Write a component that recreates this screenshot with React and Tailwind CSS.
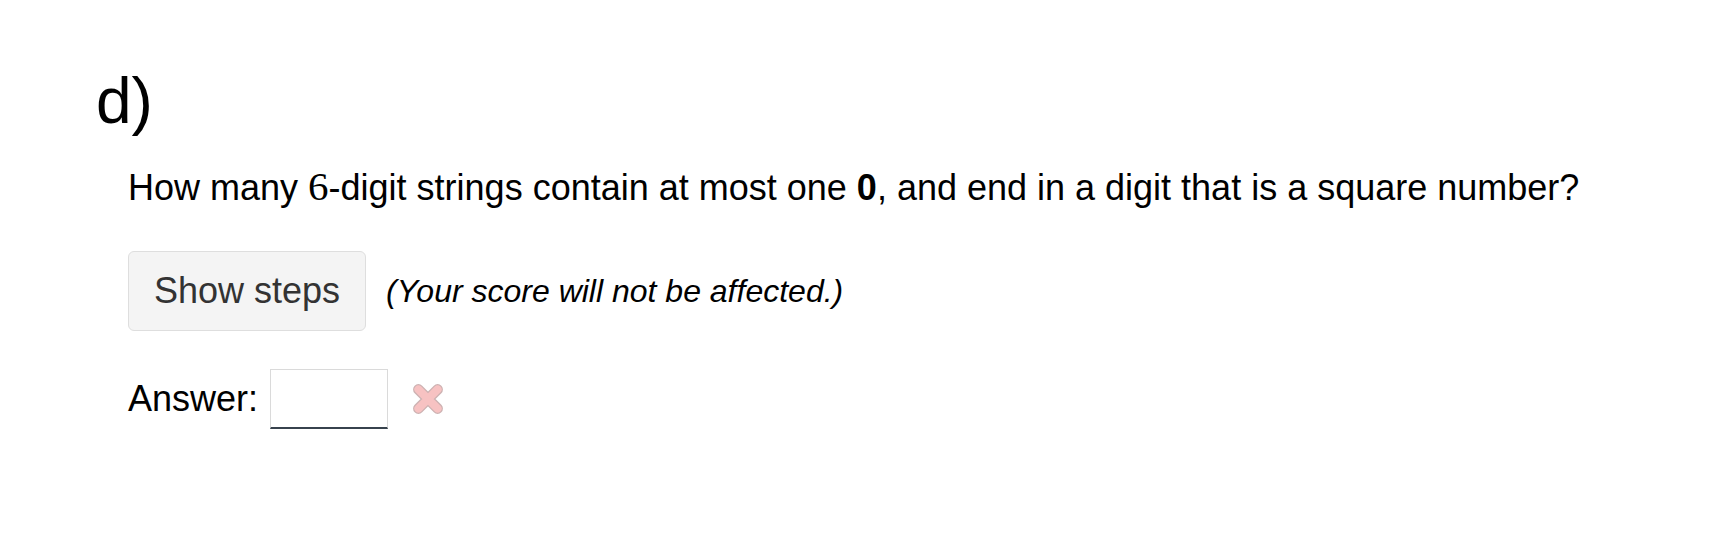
import React, { useState } from 'react';

function WrongMark() {
  return (
    <svg width="32" height="32" viewBox="0 0 30 30" aria-hidden="true">
      <g strokeLinecap="round" fill="none">
        <path d="M6 6 L24 24 M24 6 L6 24" stroke="#cdb2b2" strokeWidth="10" />
        <path d="M6 6 L24 24 M24 6 L6 24" stroke="#f7c2c2" strokeWidth="7.5" />
      </g>
    </svg>
  );
}

export default function App() {
  const [answer, setAnswer] = useState('');

  return (
    <div
      className="min-h-[534px] bg-white text-black pl-[96px] pt-[65px]"
      style={{ fontFamily: '"Liberation Sans", Arial, Helvetica, sans-serif' }}
    >
      <h3 className="text-[64px] leading-[72px] font-normal">d)</h3>

      <div className="ml-[32px]">
        <p className="mt-[27px] text-[36px] leading-[48px]">
          How many{' '}
          <span className="text-[41px] leading-[40px]" style={{ fontFamily: '"Liberation Serif", "Times New Roman", serif' }}>
            6
          </span>
          -digit strings contain at most one <b>0</b>, and end in a digit that is a square number?
        </p>

        <div className="mt-[39px] flex items-center">
          <button
            type="button"
            className="h-[80px] px-[25px] border border-[#dedede] bg-[#f4f4f4] rounded-[6px] text-[#333] text-[36px] leading-[40px]"
          >
            Show steps
          </button>
          <span className="ml-[20px] text-[32px] italic leading-[40px]">
            (Your score will not be affected.)
          </span>
        </div>

        <div className="mt-[38px] flex items-center">
          <label htmlFor="answer" className="text-[36px] leading-[48px]">
            Answer:
          </label>
          <input
            id="answer"
            value={answer}
            onChange={e => setAnswer(e.target.value)}
            className="ml-[12px] w-[118px] h-[60px] border border-[#dadada] border-b-2 border-b-[#37424d] bg-white outline-none px-2 text-[32px]"
          />
          <span className="ml-[24px] flex">
            <WrongMark />
          </span>
        </div>
      </div>
    </div>
  );
}
